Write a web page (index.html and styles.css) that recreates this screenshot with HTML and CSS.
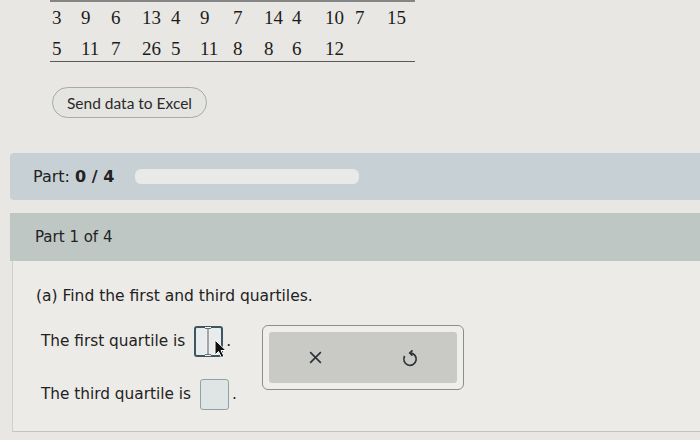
FILE: index.html
```html
<!DOCTYPE html>
<html lang="en">
<head>
  <meta charset="UTF-8" />
  <meta name="viewport" content="width=device-width, initial-scale=1.0"/>
  <title>Quartiles</title>
  <link rel="stylesheet" href="styles.css">
</head>
<body>

  <div class="data">
    <div class="data-row">
      <span>3</span><span>9</span><span>6</span><span>13</span><span>4</span><span>9</span>
      <span>7</span><span>14</span><span>4</span><span>10</span><span>7</span><span>15</span>
    </div>
    <div class="data-row">
      <span>5</span><span>11</span><span>7</span><span>26</span><span>5</span><span>11</span>
      <span>8</span><span>8</span><span>6</span><span>12</span>
    </div>
  </div>

  <button class="excel-btn">Send data to Excel</button>

  <div class="part-bar">
    <span>Part: <b>0 / 4</b></span>
    <div class="progress"></div>
  </div>

  <div class="part-head">Part 1 of 4</div>

  <div class="part-body">
    <div class="question">(a) Find the first and third quartiles.</div>

    <div class="answer-area">
      <div class="answers">
        <div class="answer">
          The first quartile is
          <span class="box focused">
            <svg class="cursor" width="40" height="40" viewBox="0 0 40 40">
              <path d="M11 2.5h6M14 2.5v26M11 28.5h6" stroke="#f4f4f4" stroke-width="3" fill="none"/>
              <path d="M11 2.5h6M14 2.5v26M11 28.5h6" stroke="#6f6f6f" stroke-width="1.2" fill="none"/>
              <path d="M21 14v15l3.5-3.5 3 6 2.5-1.2-3-5.8h5z" fill="#111" stroke="#fff" stroke-width="1"/>
            </svg>
          </span>.
        </div>
        <div class="answer">
          The third quartile is
          <span class="box"></span>.
        </div>
      </div>

      <div class="tools">
        <div class="tools-inner">
          <button class="tool">
            <svg width="15" height="15" viewBox="0 0 14 14">
              <path d="M2 2l10 10M12 2L2 12" stroke="#2c3238" stroke-width="1.5" fill="none"/>
            </svg>
          </button>
          <button class="tool">
            <svg width="18" height="18" viewBox="0 0 16 16">
              <path d="M8 3.5A5.5 5.5 0 1 1 3.24 6.25" stroke="#2c3238" stroke-width="1.5" fill="none"/>
              <path d="M10.2 1.2L7.8 3.5l2.4 2.3" stroke="#2c3238" stroke-width="1.5" fill="none"/>
            </svg>
          </button>
        </div>
      </div>
    </div>
  </div>

</body>
</html>
```

FILE: styles.css
```css
* {
  box-sizing: border-box;
}

body {
  margin: 0;
  background: #e8e7e3;
  color: #222;
  font-family: "DejaVu Sans", Verdana, sans-serif;
}

.data {
  margin-left: 50px;
  width: 365px;
  height: 62px;
  padding-left: 2px;
  border-top: 2px solid #858585;
  border-bottom: 1.5px solid #5a5a5a;
  font-family: "Liberation Serif", "Times New Roman", serif;
  font-size: 19px;
  color: #1c1c1c;
}

.data-row {
  display: grid;
  grid-template-columns: 29px 30px 31px 29px 29px 33px 31px 28px 33px 30px 32px auto;
  line-height: 31px;
}

.excel-btn {
  display: block;
  margin: 25px 0 0 52px;
  width: 155px;
  height: 31px;
  border: 1.5px solid #a9a9a6;
  border-radius: 16px;
  background: #e4e4e1;
  font-family: Lato, "Open Sans", sans-serif;
  font-size: 15.5px;
  color: #2a2a2a;
}

.part-bar {
  display: flex;
  align-items: center;
  margin: 35px 0 0 10px;
  height: 47px;
  padding-left: 23px;
  background: #c7d0d5;
  border-radius: 4px 0 0 4px;
  font-size: 16px;
}

.progress {
  width: 224px;
  height: 15px;
  margin-left: 21px;
  background: #e9eae8;
  border-radius: 6px;
}

.part-head {
  display: flex;
  align-items: center;
  margin: 13px 0 0 10px;
  height: 48px;
  padding-left: 25px;
  background: #bec7c4;
  font-size: 15px;
}

.part-body {
  margin-left: 12px;
  height: 171px;
  padding: 25px 0 0 23px;
  background: #ecebe7;
  border-left: 1px solid #cfcfcb;
  border-bottom: 1.5px solid #c4c4c0;
  font-size: 15.3px;
}

.question {
  font-size: 15.5px;
  line-height: 20px;
}

.answer-area {
  display: flex;
  align-items: flex-start;
  gap: 25px;
  margin-top: 19px;
  padding-left: 5px;
}

.answers {
  display: flex;
  flex-direction: column;
  gap: 21px;
}

.answer {
  display: flex;
  align-items: center;
  height: 32px;
}

.box {
  position: relative;
  display: inline-block;
  width: 29px;
  height: 31px;
  margin: 0 3px 0 9px;
  border: 1.5px solid #8fa3a6;
  border-radius: 3px;
  background: #dfe5e4;
}

.box.focused {
  border: 2px solid #3c5663;
  background: #e8ecec;
}

.cursor {
  position: absolute;
  left: -2px;
  top: -2px;
}

.tools {
  width: 202px;
  height: 65px;
  padding: 6px;
  border: 1.5px solid #8d8d8a;
  border-radius: 6px;
  background: #efeeeb;
}

.tools-inner {
  display: flex;
  height: 100%;
  background: #c9cac6;
  border-radius: 3px;
}

.tool {
  flex: 1;
  display: flex;
  align-items: center;
  justify-content: center;
  border: none;
  background: none;
  padding: 0;
}
```
